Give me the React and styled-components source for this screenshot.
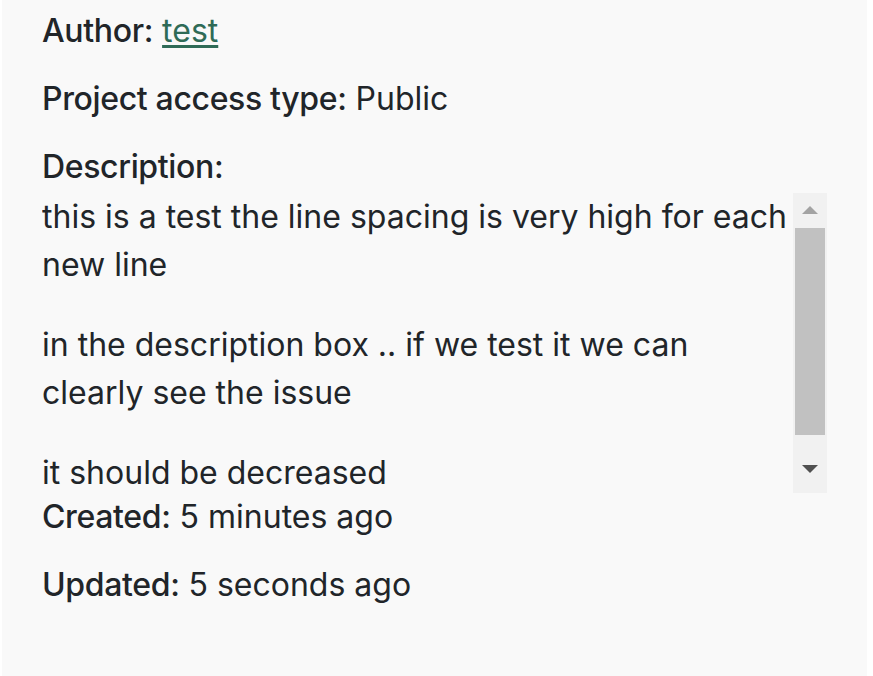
import React from 'react';
import styled, { createGlobalStyle } from 'styled-components';

const GlobalStyle = createGlobalStyle`
  html, body {
    margin: 0;
    padding: 0;
    background: #ffffff;
  }
  body {
    font-family: Inter, "Noto Sans", sans-serif;
    color: #212529;
  }
`;

const Panel = styled.div`
  box-sizing: border-box;
  margin: 0 6px 0 2px;
  height: 676px;
  background: #f9f9f9;
  padding: 7px 40px 0;
  overflow: hidden;
`;

const Row = styled.div`
  font-size: 32px;
  line-height: 48px;
  margin-bottom: ${props => (props.tight ? '2px' : '20px')};
`;

const Label = styled.span`
  font-weight: 500;
  letter-spacing: -0.35px;
`;

const AuthorLink = styled.a`
  color: #2f6b57;
  text-decoration: underline;
  text-underline-offset: 3px;
`;

const DescBox = styled.div`
  display: flex;
  width: 785px;
  height: 300px;
`;

const DescText = styled.div`
  flex: 1;
  overflow: hidden;
  font-size: 32px;
  line-height: 48px;

  p {
    margin: 0 0 32px;
  }
`;

const Scrollbar = styled.div`
  width: 34px;
  display: flex;
  flex-direction: column;
  background: #f1f1f1;
`;

const ArrowButton = styled.div`
  height: ${props => props.h}px;
  display: flex;
  align-items: center;
  justify-content: center;
  padding: ${props => props.pad};
  box-sizing: border-box;
`;

const Thumb = styled.div`
  margin: 0 2px;
  height: 207px;
  background: #c1c1c1;
`;

const Track = styled.div`
  flex: 1;
`;

function Triangle({ up, color }) {
  return (
    <svg width="16" height="9" viewBox="0 0 16 9">
      <polygon
        points={up ? '8,0 16,8 0,8' : '0,0 16,0 8,8'}
        fill={color}
      />
    </svg>
  );
}

export default function App() {
  return (
    <>
      <GlobalStyle />
      <Panel>
        <Row>
          <Label>Author:</Label> <AuthorLink href="#">test</AuthorLink>
        </Row>
        <Row>
          <Label>Project access type:</Label> Public
        </Row>
        <Row tight>
          <Label>Description:</Label>
        </Row>
        <DescBox>
          <DescText>
            <p>this is a test the line spacing is very high for each new line</p>
            <p>in the description box .. if we test it we can clearly see the issue</p>
            <p>it should be decreased</p>
          </DescText>
          <Scrollbar>
            <ArrowButton h={35} pad="0">
              <Triangle up color="#a3a3a3" />
            </ArrowButton>
            <Thumb />
            <Track />
            <ArrowButton h={40} pad="0 0 8px">
              <Triangle color="#505050" />
            </ArrowButton>
          </Scrollbar>
        </DescBox>
        <Row>
          <Label>Created:</Label> 5 minutes ago
        </Row>
        <Row>
          <Label>Updated:</Label> 5 seconds ago
        </Row>
      </Panel>
    </>
  );
}
